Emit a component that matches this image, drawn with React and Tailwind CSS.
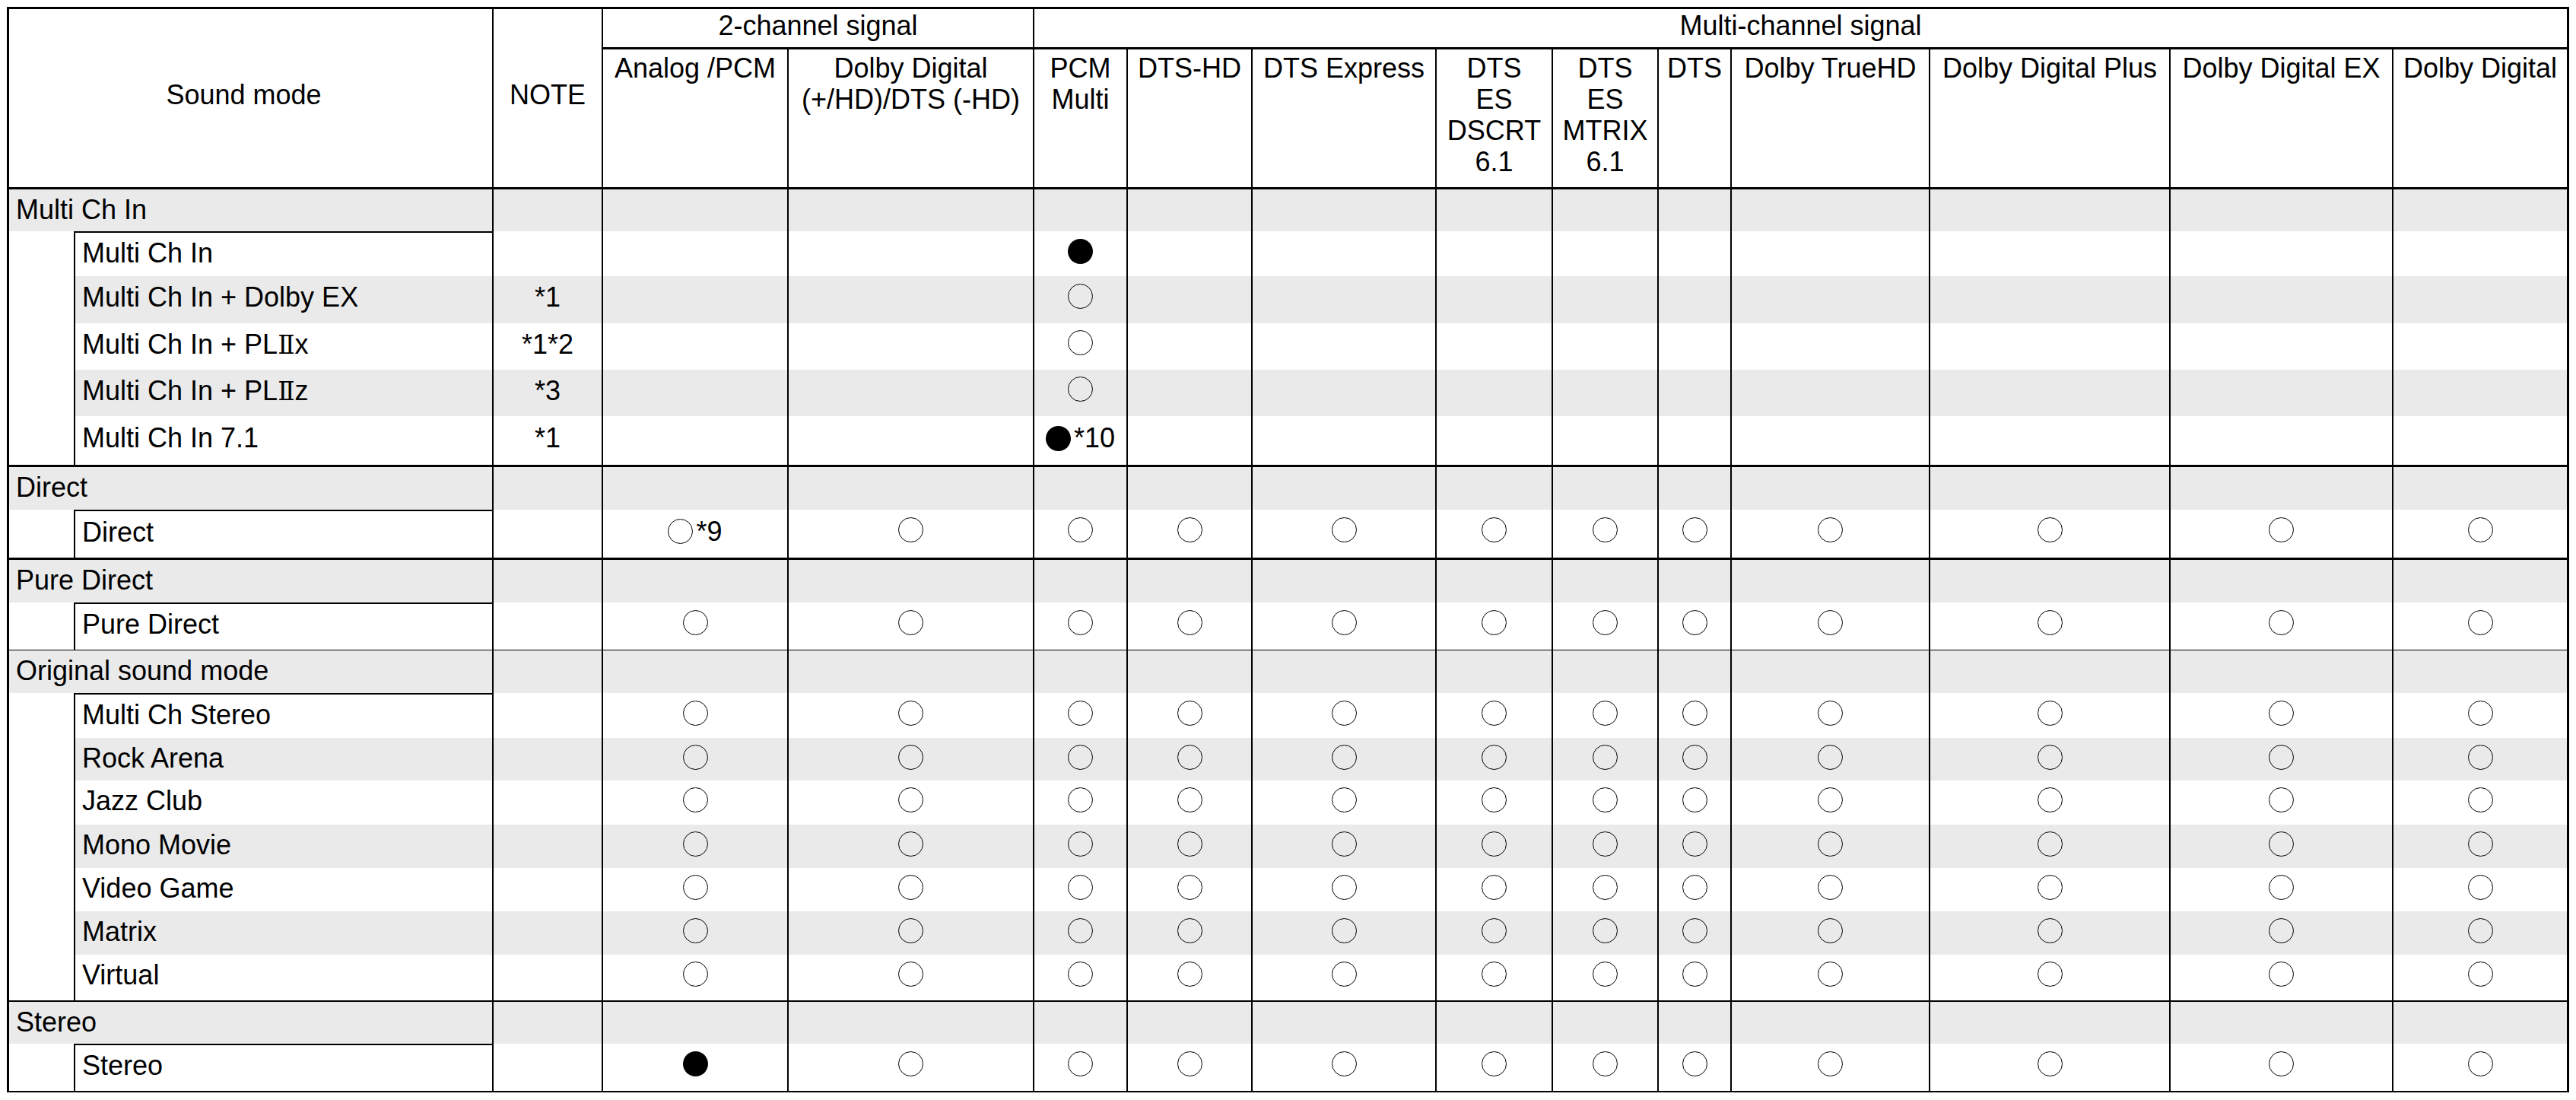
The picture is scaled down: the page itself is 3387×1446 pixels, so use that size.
import React from "react";

const COLS =
  "grid grid-cols-[85px_550px_144px_244px_323px_123px_164px_242px_153px_139px_96px_261px_316px_293px_230px]";

const O = { t: "O" };
const F = { t: "F" };
const E = null;

const allO = Array(12).fill(O);

const rows = [
  { kind: "group", label: "Multi Ch In", h: "h-[58px]" },
  { kind: "item", label: "Multi Ch In", note: "", h: "h-[59px]", first: true, gray: false, marks: [E, E, F, E, E, E, E, E, E, E, E, E] },
  { kind: "item", label: "Multi Ch In + Dolby EX", note: "*1", h: "h-[62px]", gray: true, marks: [E, E, O, E, E, E, E, E, E, E, E, E] },
  { kind: "item", label: "PLIIx", note: "*1*2", h: "h-[61px]", gray: false, marks: [E, E, O, E, E, E, E, E, E, E, E, E] },
  { kind: "item", label: "PLIIz", note: "*3", h: "h-[61px]", gray: true, marks: [E, E, O, E, E, E, E, E, E, E, E, E] },
  { kind: "item", label: "Multi Ch In 7.1", note: "*1", h: "h-[64px]", gray: false, marks: [E, E, { t: "F", n: "*10" }, E, E, E, E, E, E, E, E, E] },
  { kind: "group", label: "Direct", h: "h-[59px]" },
  { kind: "item", label: "Direct", note: "", h: "h-[63px]", first: true, gray: false, marks: [{ t: "O", n: "*9" }, O, O, O, O, O, O, O, O, O, O, O] },
  { kind: "group", label: "Pure Direct", h: "h-[59px]" },
  { kind: "item", label: "Pure Direct", note: "", h: "h-[60px]", first: true, gray: false, marks: allO },
  { kind: "group", label: "Original sound mode", h: "h-[59px]" },
  { kind: "item", label: "Multi Ch Stereo", note: "", h: "h-[59px]", first: true, gray: false, marks: allO },
  { kind: "item", label: "Rock Arena", note: "", h: "h-[56px]", gray: true, marks: allO },
  { kind: "item", label: "Jazz Club", note: "", h: "h-[58px]", gray: false, marks: allO },
  { kind: "item", label: "Mono Movie", note: "", h: "h-[57px]", gray: true, marks: allO },
  { kind: "item", label: "Video Game", note: "", h: "h-[57px]", gray: false, marks: allO },
  { kind: "item", label: "Matrix", note: "", h: "h-[57px]", gray: true, marks: allO },
  { kind: "item", label: "Virtual", note: "", h: "h-[59px]", gray: false, marks: allO },
  { kind: "group", label: "Stereo", h: "h-[58px]" },
  { kind: "item", label: "Stereo", note: "", h: "h-[61px]", first: true, gray: false, marks: [F, O, O, O, O, O, O, O, O, O, O, O] },
];

function Circle({ filled, alone }) {
  if (filled) {
    return (
      <div
        className={
          alone
            ? "w-[33px] h-[33px] rounded-full bg-black shrink-0 mb-[4px]"
            : "w-[33px] h-[33px] rounded-full bg-black shrink-0"
        }
      />
    );
  }
  return (
    <div
      className={
        alone
          ? "w-[33px] h-[33px] rounded-full border-[1.75px] border-black shrink-0 mb-[4px]"
          : "w-[33px] h-[33px] rounded-full border-[1.75px] border-black shrink-0"
      }
    />
  );
}

function Mark({ m }) {
  if (!m) return null;
  if (m.n) {
    return (
      <div className="flex items-center">
        <Circle filled={m.t === "F"} />
        <span className="ml-[4px] whitespace-nowrap">{m.n}</span>
      </div>
    );
  }
  return <Circle filled={m.t === "F"} alone />;
}

function Label({ text }) {
  if (text === "PLIIx" || text === "PLIIz") {
    return (
      <span className="whitespace-nowrap">
        Multi Ch In + PL
        <span className="font-['DejaVu_Serif','Liberation_Serif',serif] text-[33px]">Ⅱ</span>
        {text === "PLIIx" ? "x" : "z"}
      </span>
    );
  }
  return <span className="whitespace-nowrap">{text}</span>;
}

function GroupRow({ row }) {
  return (
    <div className={`${COLS} ${row.h} border-t-[3px] border-black bg-[#eaeaea]`}>
      <div className="col-span-2 flex items-center pl-[9px] pb-[6px] whitespace-nowrap">{row.label}</div>
      {Array.from({ length: 13 }).map((_, i) => (
        <div key={i} className="border-l-2 border-black" />
      ))}
    </div>
  );
}

function ItemRow({ row }) {
  const bg = row.gray ? "bg-[#eaeaea]" : "bg-white";
  return (
    <div className={`${COLS} ${row.h}`}>
      <div className="bg-white" />
      <div
        className={
          row.first
            ? `border-l-2 border-t-2 border-black ${bg} flex items-center pl-[9px] pb-[6px]`
            : `border-l-2 border-black ${bg} flex items-center pl-[9px] pb-[6px]`
        }
      >
        <Label text={row.label} />
      </div>
      <div className={`border-l-2 border-black ${bg} flex items-center justify-center pb-[6px] whitespace-nowrap`}>
        {row.note}
      </div>
      {row.marks.map((m, i) => (
        <div key={i} className={`border-l-2 border-black ${bg} flex items-center justify-center pb-[6px]`}>
          <Mark m={m} />
        </div>
      ))}
    </div>
  );
}

function Header() {
  const sub = "pt-[4px] text-center leading-[41px] whitespace-nowrap";
  return (
    <div className="flex h-[234px]">
      <div className="w-[635px] shrink-0 flex items-center justify-center pb-[8px] pr-[18px]">Sound mode</div>
      <div className="w-[144px] shrink-0 border-l-2 border-black flex items-center justify-center pb-[8px]">NOTE</div>
      <div className="w-[567px] shrink-0 border-l-2 border-black flex flex-col">
        <div className="h-[53px] shrink-0 border-b-[3px] border-black flex items-center justify-center pb-[6px] whitespace-nowrap">
          2-channel signal
        </div>
        <div className="flex flex-1">
          <div className={`w-[242px] shrink-0 ${sub}`}>Analog /PCM</div>
          <div className={`w-[323px] shrink-0 border-l-2 border-black ${sub}`}>
            Dolby Digital
            <br />
            (+/HD)/DTS (-HD)
          </div>
        </div>
      </div>
      <div className="w-[2017px] shrink-0 border-l-2 border-black flex flex-col">
        <div className="h-[53px] shrink-0 border-b-[3px] border-black flex items-center justify-center pb-[6px] whitespace-nowrap">
          Multi-channel signal
        </div>
        <div className="flex flex-1">
          <div className={`w-[121px] shrink-0 ${sub}`}>
            PCM
            <br />
            Multi
          </div>
          <div className={`w-[164px] shrink-0 border-l-2 border-black ${sub}`}>DTS-HD</div>
          <div className={`w-[242px] shrink-0 border-l-2 border-black ${sub}`}>DTS Express</div>
          <div className={`w-[153px] shrink-0 border-l-2 border-black ${sub}`}>
            DTS
            <br />
            ES
            <br />
            DSCRT
            <br />
            6.1
          </div>
          <div className={`w-[139px] shrink-0 border-l-2 border-black ${sub}`}>
            DTS
            <br />
            ES
            <br />
            MTRIX
            <br />
            6.1
          </div>
          <div className={`w-[96px] shrink-0 border-l-2 border-black ${sub}`}>DTS</div>
          <div className={`w-[261px] shrink-0 border-l-2 border-black ${sub}`}>Dolby TrueHD</div>
          <div className={`w-[316px] shrink-0 border-l-2 border-black ${sub}`}>Dolby Digital Plus</div>
          <div className={`w-[293px] shrink-0 border-l-2 border-black ${sub}`}>Dolby Digital EX</div>
          <div className={`w-[230px] shrink-0 border-l-2 border-black ${sub}`}>Dolby Digital</div>
        </div>
      </div>
    </div>
  );
}

export default function App() {
  return (
    <div className="min-h-screen bg-white pt-[9px] pl-[9px] font-['Liberation_Sans',Arial,sans-serif] text-[36px] text-black">
      <div className="w-[3369px] border-[3px] border-black">
        <Header />
        {rows.map((row, i) =>
          row.kind === "group" ? <GroupRow key={i} row={row} /> : <ItemRow key={i} row={row} />
        )}
      </div>
    </div>
  );
}
